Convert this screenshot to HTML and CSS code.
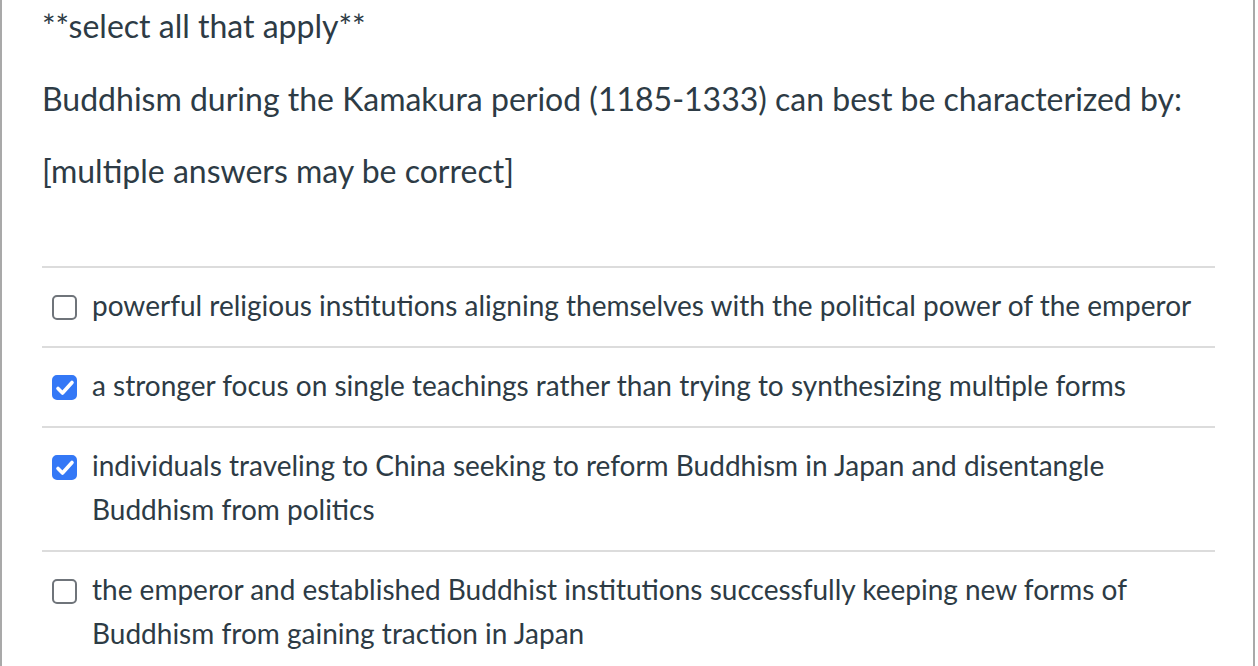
FILE: index.html
```html
<!DOCTYPE html>
<html>
<head>
<meta charset="utf-8">
<link rel="stylesheet" href="styles.css">
</head>
<body>
<div class="frame">
  <div class="question">
    <p>**select all that apply**</p>
    <p>Buddhism during the Kamakura period (1185-1333) can best be characterized by:</p>
    <p>[multiple answers may be correct]</p>
  </div>
  <div class="answers">
    <label class="answer">
      <span class="box"></span>
      <span class="text">powerful religious institutions aligning themselves with the political power of the emperor</span>
    </label>
    <label class="answer">
      <span class="box checked"><svg viewBox="0 0 24 24" width="24" height="24"><path d="M5 12.5l4.5 4.5L19 6.5" fill="none" stroke="#fff" stroke-width="3.6" stroke-linecap="round" stroke-linejoin="round"/></svg></span>
      <span class="text">a stronger focus on single teachings rather than trying to synthesizing multiple forms</span>
    </label>
    <label class="answer">
      <span class="box checked"><svg viewBox="0 0 24 24" width="24" height="24"><path d="M5 12.5l4.5 4.5L19 6.5" fill="none" stroke="#fff" stroke-width="3.6" stroke-linecap="round" stroke-linejoin="round"/></svg></span>
      <span class="text">individuals traveling to China seeking to reform Buddhism in Japan and disentangle Buddhism from politics</span>
    </label>
    <label class="answer">
      <span class="box"></span>
      <span class="text">the emperor and established Buddhist institutions successfully keeping new forms of Buddhism from gaining traction in Japan</span>
    </label>
  </div>
</div>
</body>
</html>
```

FILE: styles.css
```css
html, body {
  margin: 0;
  padding: 0;
  background: #fff;
}
body {
  font-family: Lato, "Liberation Sans", sans-serif;
  color: #2d3b45;
  line-height: 44px;
  overflow: hidden;
}
.frame {
  box-sizing: border-box;
  width: 1255px;
  height: 666px;
  border-left: 2px solid #a9a9a9;
  border-right: 2px solid #a9a9a9;
  padding: 4px 38px 0 40px;
}
.question {
  font-size: 32px;
  margin-bottom: 73px;
}
.question p {
  margin: 0 0 28.5px 0;
}
.answers {
  display: flex;
  flex-direction: column;
  font-size: 28px;
}
.answer {
  display: flex;
  align-items: flex-start;
  border-top: 2px solid #dcdcdc;
  padding: 15px 0 19px;
}
.box {
  flex: none;
  box-sizing: border-box;
  width: 25px;
  height: 25px;
  margin: 12px 15px 0 10px;
  border: 2px solid #6f747a;
  border-radius: 5px;
  background: #fff;
  display: flex;
  align-items: center;
  justify-content: center;
}
.box.checked {
  background: #3478f6;
  border-color: #3478f6;
}
.box svg {
  display: block;
  flex: none;
}
.text {
  flex: 1;
}
```
